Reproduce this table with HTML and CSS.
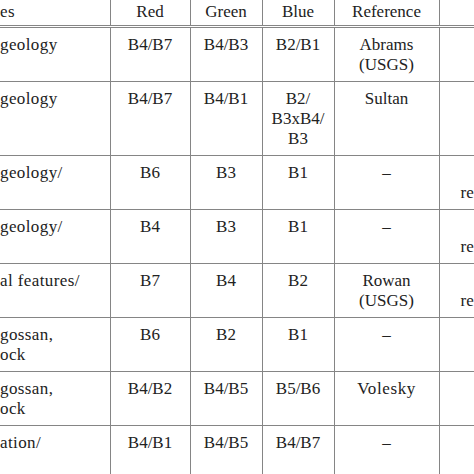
FILE: index.html
```html
<!DOCTYPE html>
<html>
<head>
<meta charset="utf-8">
<link rel="stylesheet" href="styles.css">
</head>
<body>
<table class="bands">
  <colgroup>
    <col class="c-feat"><col class="c-red"><col class="c-green"><col class="c-blue"><col class="c-ref"><col class="c-note">
  </colgroup>
  <thead>
    <tr>
      <th class="feat">es</th><th>Red</th><th>Green</th><th>Blue</th><th>Reference</th><th class="note"></th>
    </tr>
  </thead>
  <tbody>
    <tr>
      <td class="feat">geology</td><td>B4/B7</td><td>B4/B3</td><td>B2/B1</td><td>Abrams<br>(USGS)</td><td class="note"></td>
    </tr>
    <tr>
      <td class="feat">geology</td><td>B4/B7</td><td>B4/B1</td><td>B2/<br>B3xB4/<br>B3</td><td>Sultan</td><td class="note"></td>
    </tr>
    <tr>
      <td class="feat">geology/</td><td>B6</td><td>B3</td><td>B1</td><td>–</td><td class="note"><br>re</td>
    </tr>
    <tr>
      <td class="feat">geology/</td><td>B4</td><td>B3</td><td>B1</td><td>–</td><td class="note"><br>re</td>
    </tr>
    <tr>
      <td class="feat">al features/</td><td>B7</td><td>B4</td><td>B2</td><td>Rowan<br>(USGS)</td><td class="note"><br>re</td>
    </tr>
    <tr>
      <td class="feat">gossan,<br>ock</td><td>B6</td><td>B2</td><td>B1</td><td>–</td><td class="note"></td>
    </tr>
    <tr>
      <td class="feat">gossan,<br>ock</td><td>B4/B2</td><td>B4/B5</td><td>B5/B6</td><td class="spaced">Volesky</td><td class="note"></td>
    </tr>
    <tr>
      <td class="feat">ation/</td><td>B4/B1</td><td>B4/B5</td><td>B4/B7</td><td>–</td><td class="note"><br>&nbsp;</td>
    </tr>
  </tbody>
</table>
</body>
</html>
```

FILE: styles.css
```css
html, body {
  margin: 0;
  padding: 0;
  background: #ffffff;
}
body {
  width: 474px;
  height: 474px;
  overflow: hidden;
  font-family: "Liberation Serif", "Times New Roman", serif;
  font-size: 17px;
  color: #222222;
}
.bands {
  border-collapse: collapse;
  table-layout: fixed;
  width: 474px;
}
.c-feat { width: 110px; }
.c-red { width: 80px; }
.c-green { width: 72px; }
.c-blue { width: 72px; }
.c-ref { width: 105px; }
.c-note { width: 35px; }

.bands th, .bands td {
  border-left: 1px solid #858585;
  border-right: 1px solid #858585;
  text-align: center;
  vertical-align: top;
  line-height: 20px;
  font-weight: normal;
  overflow: hidden;
  white-space: nowrap;
}
.bands th {
  padding: 2px 0 3px;
  border-bottom: 3px double #858585;
}
.bands td {
  padding: 7px 0 6px;
  border-bottom: 1px solid #858585;
}
.bands .feat {
  border-left: none;
  text-align: left;
  padding-left: 0;
  letter-spacing: 0.4px;
}
.bands .note {
  border-right: none;
  text-align: left;
  padding-left: 21px;
}
.spaced {
  letter-spacing: 0.6px;
}
```
